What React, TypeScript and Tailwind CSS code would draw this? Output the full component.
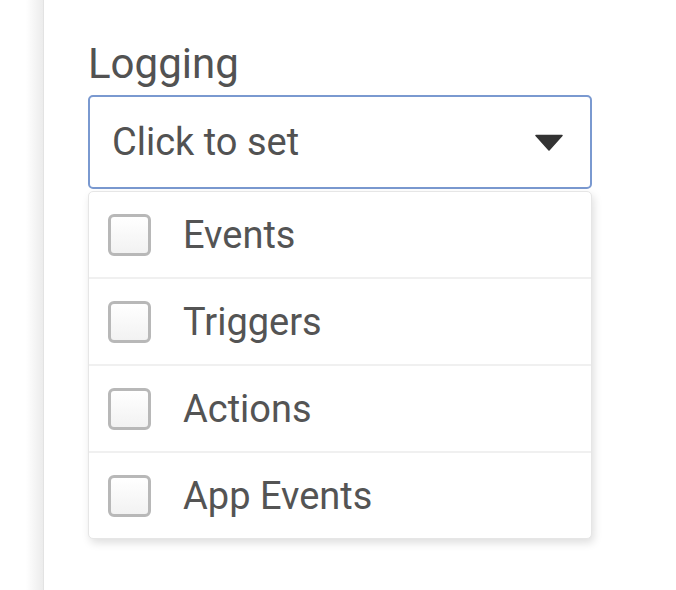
const options = ["Events", "Triggers", "Actions", "App Events"]

export default function App() {
    return (
        <div className="flex h-[590px] w-full bg-white font-['Roboto',sans-serif] text-[#555]">
            {/* side panel edge */}
            <div className="h-full w-[44px] shrink-0 border-r border-[#e3e3e3] bg-linear-to-r from-white from-60% to-[#ececec]" />

            <div className="flex w-[504px] flex-col pl-[44px] pt-[39px] box-content">
                <div className="text-[42px] leading-[50px] text-[#525252]">Logging</div>

                <div className="mt-[6px] flex h-[94px] items-center justify-between rounded-[5px] border-2 border-[#7a99d0] pl-[22px] pr-[27px]">
                    <span className="text-[38px] leading-none text-[#525252]">Click to set</span>
                    <svg width="28" height="17" viewBox="0 0 28 17">
                        <path d="M1 1.5 L27 1.5 L14 16 Z" fill="#333" stroke="#333" strokeWidth="1.5" strokeLinejoin="round" />
                    </svg>
                </div>

                <div className="mt-[2px] flex flex-col rounded-[5px] border border-[#e6e6e6] bg-white shadow-[2px_4px_8px_rgba(0,0,0,0.13)]">
                    {options.map((opt, i) => (
                        <div
                            key={opt}
                            className={
                                "flex items-center pl-[19px] " +
                                (i < options.length - 1 ? "h-[87px] border-b-2 border-[#f0f0f0]" : "h-[85px]")
                            }
                        >
                            <div className="h-[42px] w-[43px] rounded-[6px] border-[3px] border-[#b8b8b8] bg-linear-to-b from-white to-[#f2f2f2]" />
                            <span className="ml-[32px] text-[38px] leading-none text-[#545454]">{opt}</span>
                        </div>
                    ))}
                </div>
            </div>
        </div>
    )
}
